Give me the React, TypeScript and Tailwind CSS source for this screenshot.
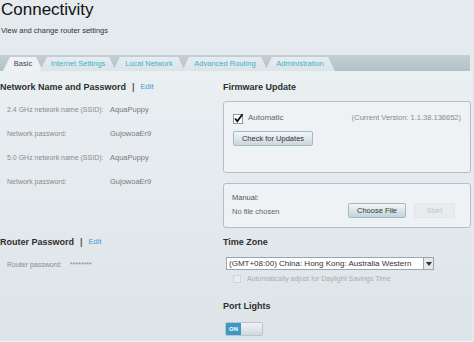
import React from "react";

const tabs = [
  { label: "Basic", w: "w-[40px]", active: true },
  { label: "Internet Settings", w: "w-[76px]", active: false },
  { label: "Local Network", w: "w-[72px]", active: false },
  { label: "Advanced Routing", w: "w-[86px]", active: false },
  { label: "Administration", w: "w-[70px]", active: false },
];

const wifiRows = [
  { label: "2.4 GHz network name (SSID):", value: "AquaPuppy" },
  { label: "Network password:", value: "GujowoaEr9" },
  { label: "5.0 GHz network name (SSID):", value: "AquaPuppy" },
  { label: "Network password:", value: "GujowoaEr9" },
];

const Heading: React.FC<{ title: string; edit?: boolean }> = ({ title, edit }) => (
  <div className="h-[12px] leading-[12px] flex items-center text-[9px] font-bold text-[#2e2e2e]">
    <span>{title}</span>
    {edit && (
      <>
        <span className="ml-[6px] text-[#555]">|</span>
        <span className="ml-[6px] font-normal text-[7.5px] text-[#3e9bd3]">Edit</span>
      </>
    )}
  </div>
);

const Checked: React.FC = () => (
  <svg width="11" height="11" viewBox="0 0 11 11" className="shrink-0">
    <rect x="0.5" y="1.5" width="9" height="9" fill="#fff" stroke="#8a9aa4" />
    <path d="M2 5.5 L4.3 8.2 L9.5 1.2" fill="none" stroke="#111" strokeWidth="1.8" />
  </svg>
);

const App: React.FC = () => {
  return (
    <div className="w-[474px] h-[342px] overflow-hidden bg-[#e4eaee] font-['Liberation_Sans',Arial,sans-serif] flex flex-col">
      {/* header */}
      <div className="h-[20px] leading-[20px] text-[17px] text-[#111] pl-[1px]">Connectivity</div>
      <div className="mt-[6px] h-[10px] leading-[10px] text-[7.5px] text-[#333] pl-[1px]">
        View and change router settings
      </div>

      {/* tab band */}
      <div className="mt-[19px] h-[16px] bg-gradient-to-b from-[#c4cfd5] to-[#b3c1c8] flex items-end pl-[3px] w-[470px]">
        {tabs.map((t, i) => (
          <div
            key={t.label}
            className={`${t.w} h-[14px] ${i > 0 ? "-ml-[3px]" : ""} flex items-center justify-center text-[7.5px] [clip-path:polygon(7px_0,calc(100%-7px)_0,100%_100%,0_100%)] ${
              t.active ? "bg-[#eef2f4] text-[#444]" : "bg-gradient-to-b from-[#e6edf0] to-[#dbe4e8] text-[#3cb3c9]"
            }`}
          >
            {t.label}
          </div>
        ))}
      </div>

      {/* content */}
      <div className="flex-1 flex bg-gradient-to-b from-[#eaeff2] to-[#dde4e8] w-[472px] border-b border-[#f2f5f7]">
        {/* left column */}
        <div className="w-[223px] pt-[10px] flex flex-col">
          <Heading title="Network Name and Password" edit />
          <div className="mt-[5px]">
            {wifiRows.map((r, i) => (
              <div key={i} className="h-[24px] leading-[24px] flex text-[7px] text-[#8b8b8b] whitespace-nowrap">
                <span className="w-[110px] pl-[7px]">{r.label}</span>
                <span className="text-[#7a7a7a] text-[7.5px]">{r.value}</span>
              </div>
            ))}
          </div>
          <div className="mt-[42px]">
            <Heading title="Router Password" edit />
          </div>
          <div className="mt-[5px] h-[24px] leading-[24px] flex text-[7px] text-[#8b8b8b] whitespace-nowrap">
            <span className="pl-[7px] w-[70px]">Router password:</span>
            <span>********</span>
          </div>
        </div>

        {/* right column */}
        <div className="w-[248px] pt-[10px] flex flex-col">
          <Heading title="Firmware Update" />

          <div className="mt-[8px] h-[72px] rounded-[3px] border border-[#b3bec5] bg-[#eef2f4] px-[9px] pt-[10px]">
            <div className="h-[12px] flex items-center text-[7.5px]">
              <Checked />
              <span className="ml-[4px] text-[8px] text-[#666]">Automatic</span>
              <span className="ml-auto text-[#8a8a8a]">(Current Version: 1.1.38.136652)</span>
            </div>
            <div className="mt-[7px] w-[80px] h-[15px] border border-[#a8b8c1] rounded-[2px] bg-gradient-to-b from-[#f3f6f8] to-[#c9d7de] flex items-center justify-center text-[7.5px] text-[#333]">
              Check for Updates
            </div>
          </div>

          <div className="mt-[10px] h-[45px] rounded-[3px] border border-[#b3bec5] bg-[#eef2f4] pl-[8px] pt-[8px] relative">
            <div className="h-[12px] leading-[12px] text-[7.5px] text-[#555]">Manual:</div>
            <div className="h-[12px] leading-[12px] text-[7.5px] text-[#666] mt-[2px]">No file chosen</div>
            <div className="absolute left-[124px] top-[19px] flex gap-[8px]">
              <div className="w-[58px] h-[15px] border border-[#a8b8c1] rounded-[2px] bg-gradient-to-b from-[#f3f6f8] to-[#c3d3db] flex items-center justify-center text-[7.5px] text-[#333]">
                Choose File
              </div>
              <div className="w-[41px] h-[15px] border border-[#e0e6e9] rounded-[2px] bg-[#e7ecef] flex items-center justify-center text-[7.5px] text-[#c2c8cc]">
                Start
              </div>
            </div>
          </div>

          <div className="mt-[8px]">
            <Heading title="Time Zone" />
          </div>
          <div className="mt-[9px] ml-[3px] w-[208px] h-[13px] border border-[#9aa6ad] bg-white flex items-center">
            <span className="pl-[2px] text-[8px] text-[#333] whitespace-nowrap overflow-hidden flex-1">
              (GMT+08:00) China: Hong Kong: Australia Western
            </span>
            <span className="w-[10px] h-[11px] border-l border-[#9aa6ad] bg-[#e4e8ea] flex items-center justify-center">
              <svg width="6" height="4" viewBox="0 0 6 4">
                <path d="M0 0 L6 0 L3 4 Z" fill="#333" />
              </svg>
            </span>
          </div>
          <div className="mt-[4px] h-[10px] flex items-center pl-[10px]">
            <span className="w-[8px] h-[8px] border border-[#c7d6df] bg-[#e5eef3]" />
            <span className="ml-[6px] text-[7px] text-[#ababab]">Automatically adjust for Daylight Savings Time</span>
          </div>

          <div className="mt-[16px]">
            <Heading title="Port Lights" />
          </div>
          <div className="mt-[10px] ml-[2px] w-[38px] h-[14px] flex rounded-[2px] overflow-hidden border border-[#b9c5cb]">
            <div className="w-[15px] bg-[#3f98c3] flex items-center justify-center text-[6px] font-bold text-white">ON</div>
            <div className="flex-1 bg-gradient-to-b from-[#f1f4f6] to-[#cfd9de]" />
          </div>
        </div>
      </div>
    </div>
  );
};

export default App;
